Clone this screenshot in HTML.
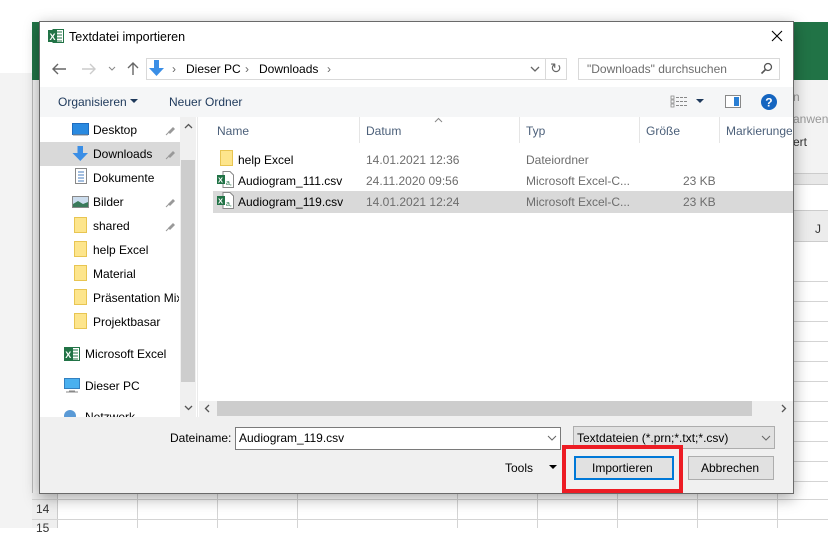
<!DOCTYPE html>
<html><head><meta charset="utf-8"><style>
*{margin:0;padding:0;box-sizing:border-box}
body{width:828px;height:528px;overflow:hidden;background:#fff;font-family:"Liberation Sans",sans-serif;font-size:12px;color:#000;position:relative}
.a{position:absolute}
.t{position:absolute;white-space:nowrap;line-height:14px}
.g{color:#6d6d6d}
.hd{color:#4c607a}
</style></head><body>
<!-- excel background -->
<div class="a" style="left:0;top:73px;width:40px;height:455px;background:#f3f3f3"></div>
<div class="a" style="left:32px;top:22px;width:8px;height:58px;background:#217346"></div>
<div class="a" style="left:32px;top:80px;width:1px;height:448px;background:#bbb"></div>
<div class="a" style="left:32px;top:493px;width:796px;height:35px;background:#fff"></div>
<div class="a" style="left:32px;top:493px;width:26px;height:35px;background:#efefef;border-right:1px solid #ccc"></div>
<div class="a" style="left:32px;top:499px;width:796px;height:1px;background:#d4d4d4"></div>
<div class="a" style="left:32px;top:519px;width:796px;height:1px;background:#d4d4d4"></div>
<div class="t" style="left:36px;top:502px;color:#333">14</div>
<div class="t" style="left:36px;top:521px;color:#333">15</div>
<div class="a" style="left:137px;top:493px;width:1px;height:35px;background:#d4d4d4"></div>
<div class="a" style="left:217px;top:493px;width:1px;height:35px;background:#d4d4d4"></div>
<div class="a" style="left:297px;top:493px;width:1px;height:35px;background:#d4d4d4"></div>
<div class="a" style="left:457px;top:493px;width:1px;height:35px;background:#d4d4d4"></div>
<div class="a" style="left:537px;top:493px;width:1px;height:35px;background:#d4d4d4"></div>
<div class="a" style="left:617px;top:493px;width:1px;height:35px;background:#d4d4d4"></div>
<div class="a" style="left:697px;top:493px;width:1px;height:35px;background:#d4d4d4"></div>
<div class="a" style="left:777px;top:493px;width:1px;height:35px;background:#d4d4d4"></div>
<!-- right excel -->
<div class="a" style="left:793px;top:22px;width:35px;height:58px;background:#217346"></div>
<div class="a" style="left:793px;top:80px;width:35px;height:93px;background:#f3f3f3"></div>
<div class="t" style="left:793px;top:90px;color:#999">n</div>
<div class="t" style="left:793px;top:112px;color:#999">anwen</div>
<div class="t" style="left:793px;top:135px;color:#333">ert</div>
<div class="a" style="left:793px;top:173px;width:35px;height:12px;background:#e8e8e8;border-top:1px solid #ccc;border-bottom:1px solid #ccc"></div>
<div class="a" style="left:793px;top:210px;width:35px;height:32px;background:#ececec;border-top:1px solid #ccc;border-bottom:1px solid #ccc"></div>
<div class="t" style="left:815px;top:222px;color:#333">J</div>
<div class="a" style="left:793px;top:262px;width:35px;height:231px;background:repeating-linear-gradient(#fff 0 19px,#d4d4d4 19px 20px)"></div>
<div class="a" style="left:40px;top:80px;width:18px;height:413px;background:repeating-linear-gradient(#efefef 0 19px,#ccc 19px 20px)"></div>

<!-- dialog -->
<div class="a" style="left:39px;top:21px;width:755px;height:473px;background:#fff;border:1px solid #6a6a6a;box-shadow:0 4px 14px rgba(0,0,0,.35)"></div>
<!-- title -->
<svg class="a" style="left:48px;top:29px" width="16" height="14"><rect x="5" y="0.5" width="10.5" height="13" fill="#fff" stroke="#217346"/><path d="M9 3h5M9 6h5M9 9h5M9 12h5" stroke="#217346"/><rect x="0" y="1" width="9" height="12" fill="#217346"/><text x="1.5" y="11" font-size="9" font-weight="bold" fill="#fff" font-family="Liberation Sans">X</text></svg>
<div class="t" style="left:69px;top:30px;font-size:12.5px">Textdatei importieren</div>
<svg class="a" style="left:771px;top:30px" width="12" height="12"><path d="M1 1L11 11M11 1L1 11" stroke="#000" stroke-width="1.1"/></svg>
<!-- nav -->
<svg class="a" style="left:51px;top:62px" width="16" height="14"><path d="M2 7H15M7 2L2 7L7 12" stroke="#666" stroke-width="1.4" fill="none"/></svg>
<svg class="a" style="left:81px;top:62px" width="16" height="14"><path d="M1 7H14M9 2L14 7L9 12" stroke="#ccc" stroke-width="1.4" fill="none"/></svg>
<svg class="a" style="left:108px;top:66px" width="8" height="6"><path d="M1 1L4 4L7 1" stroke="#888" fill="none"/></svg>
<svg class="a" style="left:126px;top:61px" width="14" height="15"><path d="M7 14V2M2 7L7 2L12 7" stroke="#666" stroke-width="1.4" fill="none"/></svg>
<div class="a" style="left:146px;top:58px;width:400px;height:22px;border:1px solid #d9d9d9"></div>
<svg class="a" style="left:148px;top:59px" width="18" height="19"><path d="M6 1H11V9H16L8.5 17L1 9H6Z" fill="#3a8ee6"/></svg>
<div class="t" style="left:172px;top:62px;color:#666">›</div>
<div class="t" style="left:186px;top:62px">Dieser PC</div>
<div class="t" style="left:245px;top:62px;color:#666">›</div>
<div class="t" style="left:259px;top:62px">Downloads</div>
<div class="t" style="left:327px;top:62px;color:#666">›</div>
<svg class="a" style="left:530px;top:66px" width="10" height="7"><path d="M1 1L5 5L9 1" stroke="#666" stroke-width="1.3" fill="none"/></svg>
<div class="a" style="left:545px;top:58px;width:22px;height:22px;border:1px solid #d9d9d9"></div>
<div class="t" style="left:550px;top:61px;color:#666;font-size:14px">↻</div>
<div class="a" style="left:578px;top:58px;width:202px;height:22px;border:1px solid #d9d9d9"></div>
<div class="t" style="left:587px;top:62px;color:#6d6d6d">"Downloads" durchsuchen</div>
<svg class="a" style="left:760px;top:62px" width="13" height="13"><circle cx="8" cy="5" r="3.5" stroke="#555" stroke-width="1.3" fill="none"/><path d="M5.5 7.5L1.5 11.5" stroke="#555" stroke-width="1.6"/></svg>
<!-- toolbar -->
<div class="a" style="left:40px;top:87px;width:753px;height:30px;background:#f5f6f7"></div>
<div class="t" style="left:58px;top:95px;color:#1e395b">Organisieren</div>
<svg class="a" style="left:130px;top:99px" width="8" height="5"><path d="M0 0H8L4 4Z" fill="#1e395b"/></svg>
<div class="t" style="left:169px;top:95px;color:#1e395b">Neuer Ordner</div>
<svg class="a" style="left:670px;top:95px" width="18" height="13"><path d="M1 1h3v3h-3zM1 5h3v3h-3zM1 9h3v3h-3z" stroke="#888" fill="none" stroke-width=".8"/><path d="M6 2.5h11M6 6.5h11M6 10.5h11" stroke="#888" stroke-dasharray="3 1"/></svg>
<svg class="a" style="left:696px;top:99px" width="8" height="5"><path d="M0 0H8L4 4Z" fill="#1e395b"/></svg>
<svg class="a" style="left:725px;top:95px" width="16" height="13"><rect x=".5" y=".5" width="15" height="12" fill="#fff" stroke="#888"/><rect x="9" y="2" width="5" height="9" fill="#2a7fd4"/></svg>
<svg class="a" style="left:761px;top:94px" width="16" height="16"><circle cx="8" cy="8" r="8" fill="#1565c0"/><text x="4.2" y="12.5" font-size="12" font-weight="bold" fill="#fff" font-family="Liberation Sans">?</text></svg>
<!-- nav pane -->
<div class="a" style="left:40px;top:142px;width:140px;height:24px;background:#d9d9d9"></div>
<div class="a" style="left:180px;top:117px;width:16px;height:300px;background:#f0f0f0"></div>
<div class="a" style="left:181px;top:160px;width:14px;height:222px;background:#cdcdcd"></div>
<svg class="a" style="left:184px;top:123px" width="9" height="6"><path d="M1 5L4.5 1.5L8 5" stroke="#555" stroke-width="1.3" fill="none"/></svg>
<svg class="a" style="left:184px;top:405px" width="9" height="6"><path d="M1 1L4.5 4.5L8 1" stroke="#555" stroke-width="1.3" fill="none"/></svg>
<div class="a" style="left:197px;top:117px;width:1px;height:300px;background:#eaeaea"></div>

<svg class="a" style="left:72px;top:123px" width="17" height="13"><rect x=".5" y=".5" width="16" height="11" fill="#2a8ae0" stroke="#1c6cc0"/><path d="M1 12h15" stroke="#888"/></svg>
<div class="t" style="left:93px;top:123px">Desktop</div>
<svg class="a" style="left:72px;top:145px" width="17" height="18"><path d="M5.5 1H11V8H16L8.3 16L.5 8H5.5Z" fill="#3a8ee6"/></svg>
<div class="t" style="left:93px;top:147px">Downloads</div>
<svg class="a" style="left:75px;top:168px" width="12" height="16"><rect x=".5" y=".5" width="11" height="15" fill="#fff" stroke="#888"/><path d="M3 4h6M3 7h6M3 10h6M3 13h6" stroke="#4a7fc0"/></svg>
<div class="t" style="left:93px;top:171px">Dokumente</div>
<svg class="a" style="left:72px;top:196px" width="17" height="12"><rect x=".5" y=".5" width="16" height="11" fill="#cde" stroke="#888"/><path d="M1 8L6 5L11 8L16 6V11H1Z" fill="#3a7a5a"/></svg>
<div class="t" style="left:93px;top:195px">Bilder</div>
<div class="t" style="left:93px;top:219px">shared</div>
<div class="t" style="left:93px;top:243px">help Excel</div>
<div class="t" style="left:93px;top:267px">Material</div>
<div class="t" style="left:93px;top:291px;width:86px;overflow:hidden">Präsentation Mix</div>
<div class="t" style="left:93px;top:315px">Projektbasar</div>
<svg class="a" style="left:74px;top:217px" width="14" height="112">
<g fill="#fde58c" stroke="#e8c552"><rect x=".5" y=".5" width="12" height="15"/><rect x=".5" y="24.5" width="12" height="15"/><rect x=".5" y="48.5" width="12" height="15"/><rect x=".5" y="72.5" width="12" height="15"/><rect x=".5" y="96.5" width="12" height="15"/></g></svg>
<svg class="a" style="left:165px;top:124px" width="11" height="110"><g fill="#999"><path d="M3 8L8 3L10 5L5 10Z"/><path d="M3 32L8 27L10 29L5 34Z"/><path d="M3 80L8 75L10 77L5 82Z"/><path d="M3 104L8 99L10 101L5 106Z"/></g><g stroke="#999"><path d="M1 11L4 8M1 35L4 32M1 83L4 80M1 107L4 104"/></g></svg>
<svg class="a" style="left:64px;top:346px" width="16" height="15"><rect x="5" y="1.5" width="10.5" height="13" fill="#fff" stroke="#217346"/><path d="M9 4h5M9 7h5M9 10h5M9 13h5" stroke="#217346"/><rect x="0" y="1" width="9" height="14" fill="#217346"/><text x="1.3" y="12" font-size="9" font-weight="bold" fill="#fff" font-family="Liberation Sans">X</text></svg>
<div class="t" style="left:85px;top:347px">Microsoft Excel</div>
<svg class="a" style="left:64px;top:378px" width="16" height="15"><rect x=".5" y=".5" width="15" height="10" fill="#4ab0ef" stroke="#3380c0"/><path d="M5 13h6M2 14h12" stroke="#888"/></svg>
<div class="t" style="left:85px;top:379px">Dieser PC</div>
<div class="a" style="left:40px;top:406px;width:140px;height:11px;overflow:hidden"><div class="t" style="left:45px;top:4px">Netzwerk</div><div class="a" style="left:24px;top:4px;width:12px;height:12px;border-radius:6px;background:#5a9ad6"></div></div>

<!-- file list -->
<div class="t hd" style="left:217px;top:124px">Name</div>
<div class="t hd" style="left:366px;top:124px">Datum</div>
<svg class="a" style="left:434px;top:117px" width="9" height="6"><path d="M1 5L4.5 1.5L8 5" stroke="#888" fill="none"/></svg>
<div class="a" style="left:359px;top:117px;width:1px;height:26px;background:#e5e5e5"></div>
<div class="t hd" style="left:526px;top:124px">Typ</div>
<div class="a" style="left:519px;top:117px;width:1px;height:26px;background:#e5e5e5"></div>
<div class="t hd" style="left:646px;top:124px">Größe</div>
<div class="a" style="left:639px;top:117px;width:1px;height:26px;background:#e5e5e5"></div>
<div class="t hd" style="left:726px;top:124px;width:66px;overflow:hidden">Markierungen</div>
<div class="a" style="left:719px;top:117px;width:1px;height:26px;background:#e5e5e5"></div>

<div class="a" style="left:213px;top:191px;width:580px;height:22px;background:#d9d9d9"></div>
<svg class="a" style="left:220px;top:150px" width="14" height="17"><rect x=".5" y=".5" width="12" height="15" fill="#fde58c" stroke="#e8c552"/></svg>
<div class="t" style="left:238px;top:153px">help Excel</div>
<div class="t g" style="left:366px;top:153px">14.01.2021 12:36</div>
<div class="t g" style="left:526px;top:153px">Dateiordner</div>
<svg class="a" style="left:217px;top:171px;" width="18" height="17"><path d="M6 .5H13L16.5 4V16.5H6Z" fill="#fff" stroke="#888"/><rect x="0" y="4" width="8" height="9" fill="#217346"/><text x="1" y="11.5" font-size="7.5" font-weight="bold" fill="#fff" font-family="Liberation Sans">X</text><text x="9" y="14" font-size="7" fill="#217346" font-family="Liberation Sans">a,</text></svg>
<div class="t" style="left:238px;top:174px">Audiogram_111.csv</div>
<div class="t g" style="left:366px;top:174px">24.11.2020 09:56</div>
<div class="t g" style="left:526px;top:174px">Microsoft Excel-C...</div>
<div class="t g" style="left:683px;top:174px">23 KB</div>
<svg class="a" style="left:217px;top:192px;" width="18" height="17"><path d="M6 .5H13L16.5 4V16.5H6Z" fill="#fff" stroke="#888"/><rect x="0" y="4" width="8" height="9" fill="#217346"/><text x="1" y="11.5" font-size="7.5" font-weight="bold" fill="#fff" font-family="Liberation Sans">X</text><text x="9" y="14" font-size="7" fill="#217346" font-family="Liberation Sans">a,</text></svg>
<div class="t" style="left:238px;top:195px">Audiogram_119.csv</div>
<div class="t g" style="left:366px;top:195px">14.01.2021 12:24</div>
<div class="t g" style="left:526px;top:195px">Microsoft Excel-C...</div>
<div class="t g" style="left:683px;top:195px">23 KB</div>

<!-- h scrollbar -->
<div class="a" style="left:199px;top:401px;width:594px;height:16px;background:#f0f0f0"></div>
<div class="a" style="left:217px;top:401px;width:535px;height:15px;background:#cdcdcd"></div>
<svg class="a" style="left:204px;top:404px" width="6" height="9"><path d="M5 1L1.5 4.5L5 8" stroke="#555" stroke-width="1.3" fill="none"/></svg>
<svg class="a" style="left:781px;top:404px" width="6" height="9"><path d="M1 1L4.5 4.5L1 8" stroke="#555" stroke-width="1.3" fill="none"/></svg>

<!-- bottom -->
<div class="a" style="left:40px;top:417px;width:753px;height:76px;background:#f0f0f0"></div>
<div class="t" style="left:170px;top:431px">Dateiname:</div>
<div class="a" style="left:235px;top:427px;width:326px;height:23px;background:#fff;border:1px solid #7a7a7a"></div>
<div class="t" style="left:239px;top:431px">Audiogram_119.csv</div>
<svg class="a" style="left:547px;top:435px" width="10" height="6"><path d="M1 1L5 5L9 1" stroke="#666" fill="none"/></svg>
<div class="a" style="left:573px;top:426px;width:202px;height:23px;background:#e1e1e1;border:1px solid #adadad"></div>
<div class="t" style="left:577px;top:431px">Textdateien (*.prn;*.txt;*.csv)</div>
<svg class="a" style="left:761px;top:435px" width="10" height="6"><path d="M1 1L5 5L9 1" stroke="#666" fill="none"/></svg>
<div class="t" style="left:505px;top:461px">Tools</div>
<svg class="a" style="left:549px;top:465px" width="8" height="5"><path d="M0 0H8L4 4Z" fill="#000"/></svg>
<div class="a" style="left:562px;top:445px;width:121px;height:48px;border:4px solid #ed1c24"></div>
<div class="a" style="left:574px;top:456px;width:100px;height:24px;background:#e1e1e1;border:2px solid #0078d7"></div>
<div class="t" style="left:592px;top:461px">Importieren</div>
<div class="a" style="left:688px;top:456px;width:86px;height:24px;background:#e1e1e1;border:1px solid #adadad"></div>
<div class="t" style="left:701px;top:461px">Abbrechen</div>
</body></html>
